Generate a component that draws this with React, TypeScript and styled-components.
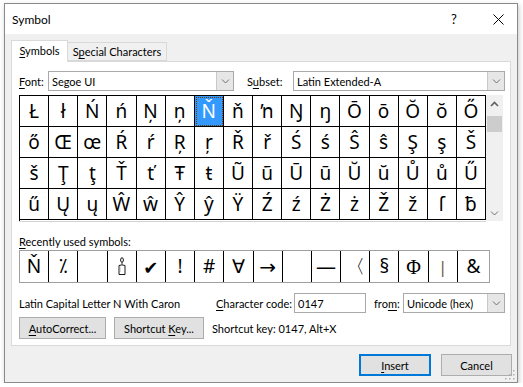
import React from 'react';
import styled, { createGlobalStyle } from 'styled-components';

const UI = `"Lato", "Noto Sans", sans-serif`;

const Global = createGlobalStyle`
  html, body { margin: 0; padding: 0; background: #ffffff; }
  body { font-family: ${UI}; font-size: 11px; color: #000; }
  u { text-decoration-thickness: 1px; text-underline-offset: 2px; }
`;

const Window = styled.div`
  margin: 3px 0 0 4px;
  width: 514px;
  height: 380px;
  box-sizing: border-box;
  border: 1px solid #8a8a8a;
  box-shadow: 1px 2px 5px rgba(0, 0, 0, 0.22);
  background: #f0f0f0;
  display: flex;
  flex-direction: column;
  position: relative;
  font-family: ${UI};
  font-size: 11px;
`;

const TitleBar = styled.div`
  height: 30px;
  flex: none;
  background: #fff;
  display: flex;
  align-items: center;
  padding-left: 7px;
`;

const Title = styled.div`
  flex: 1;
  font-size: 12px;
`;

const TitleButton = styled.div<{ $w: number }>`
  width: ${p => p.$w}px;
  height: 30px;
  display: flex;
  align-items: center;
  justify-content: center;
  font-size: 13px;
  color: #000;
`;

const Body = styled.div`
  flex: 1;
  display: flex;
  flex-direction: column;
  padding: 6px 6px 0 6px;
`;

const TabStrip = styled.div`
  display: flex;
  align-items: flex-end;
  height: 21px;
  position: relative;
  z-index: 2;
`;

const Tab = styled.div<{ $active?: boolean; $w: number }>`
  box-sizing: border-box;
  width: ${p => p.$w}px;
  height: ${p => (p.$active ? 22 : 19)}px;
  margin-bottom: ${p => (p.$active ? -1 : 0)}px;
  background: ${p => (p.$active ? '#fff' : '#f0f0f0')};
  border: 1px solid #d9d9d9;
  border-bottom: ${p => (p.$active ? 'none' : '1px solid #d9d9d9')};
  border-left: ${p => (p.$active ? '1px solid #d9d9d9' : 'none')};
  display: flex;
  align-items: center;
  justify-content: center;
  padding-bottom: ${p => (p.$active ? 2 : 0)}px;
  white-space: nowrap;
`;

const Panel = styled.div`
  box-sizing: border-box;
  width: 500px;
  height: 285px;
  background: #fff;
  border: 1px solid #d9d9d9;
  padding: 9px 6px 0 7px;
  display: flex;
  flex-direction: column;
  position: relative;
  z-index: 1;
`;

const Row = styled.div<{ $h: number; $mt?: number }>`
  display: flex;
  align-items: center;
  height: ${p => p.$h}px;
  margin-top: ${p => p.$mt ?? 0}px;
`;

const Label = styled.span<{ $w?: number; $ml?: number }>`
  ${p => (p.$w ? `width: ${p.$w}px;` : '')}
  margin-left: ${p => p.$ml ?? 0}px;
  flex: none;
  white-space: nowrap;
`;

const Combo = styled.div<{ $w: number }>`
  box-sizing: border-box;
  width: ${p => p.$w}px;
  height: 20px;
  border: 1px solid #a9a9a9;
  background: #fff;
  display: flex;
  align-items: stretch;
  flex: none;
`;

const ComboText = styled.div`
  flex: 1;
  display: flex;
  align-items: center;
  padding-left: 3px;
  white-space: nowrap;
`;

const ComboButton = styled.div`
  width: 16px;
  background: #e6e6e6;
  border-left: 1px solid #c9c9c9;
  display: flex;
  align-items: center;
  justify-content: center;
`;

const Edit = styled.div<{ $w: number }>`
  box-sizing: border-box;
  width: ${p => p.$w}px;
  height: 20px;
  border: 1px solid #a9a9a9;
  background: #fff;
  display: flex;
  align-items: center;
  padding-left: 3px;
  flex: none;
`;

const GridWrap = styled.div`
  display: flex;
  margin-top: 4px;
`;

const Grid = styled.div`
  box-sizing: border-box;
  width: 467px;
  display: grid;
  grid-template-columns: repeat(16, 1fr);
  grid-auto-rows: 31px;
  border-top: 1px solid #000;
  border-left: 1px solid #000;
  box-shadow: 0 1px 0 #d4d4d4;
`;

const Cell = styled.div<{ $sel?: boolean }>`
  box-sizing: border-box;
  border-right: 1px solid #000;
  border-bottom: 1px solid #000;
  display: flex;
  align-items: center;
  justify-content: center;
  font-family: "Noto Sans", "DejaVu Sans", sans-serif;
  font-size: 19px;
  line-height: 1;
  padding-top: 1px;
  background: ${p => (p.$sel ? '#3399ff' : 'transparent')};
  color: ${p => (p.$sel ? '#fff' : '#000')};
  outline: ${p => (p.$sel ? '1px dotted #6a3a00' : 'none')};
  outline-offset: -2px;
`;

const Scrollbar = styled.div`
  width: 17px;
  height: 126px;
  background: #f0f0f0;
  display: flex;
  flex-direction: column;
  align-items: center;
`;

const ScrollArrow = styled.div`
  height: 17px;
  width: 17px;
  display: flex;
  align-items: center;
  justify-content: center;
  flex: none;
`;

const Thumb = styled.div`
  width: 15px;
  height: 16px;
  background: #cdcdcd;
  margin-top: 4px;
`;

const Spacer = styled.div`
  flex: 1;
`;

const RecentRow = styled.div`
  box-sizing: border-box;
  width: 471px;
  height: 33px;
  margin-top: 1px;
  border: 1px solid #a0a0a0;
  display: grid;
  grid-template-columns: repeat(15, 29.2px) 1fr;
`;

const RecentCell = styled.div<{ $serif?: boolean; $last?: boolean }>`
  box-sizing: border-box;
  border-right: ${p => (p.$last ? 'none' : '1px solid #000')};
  display: flex;
  align-items: center;
  justify-content: center;
  font-family: ${p => (p.$serif ? '"Liberation Serif", serif' : '"Noto Sans", "DejaVu Sans", sans-serif')};
  font-size: 19px;
  line-height: 1;
`;

const Button = styled.div<{ $w: number; $default?: boolean; $ml?: number }>`
  box-sizing: border-box;
  width: ${p => p.$w}px;
  height: 22px;
  flex: none;
  margin-left: ${p => p.$ml ?? 0}px;
  background: #e1e1e1;
  border: ${p => (p.$default ? '2px solid #0078d7' : '1px solid #adadad')};
  display: flex;
  align-items: center;
  justify-content: center;
  white-space: nowrap;
`;

const Footer = styled.div`
  display: flex;
  justify-content: flex-end;
  gap: 10px;
  margin-top: 8px;
  margin-right: -1px;
`;

const Grip = styled.svg`
  position: absolute;
  right: 2px;
  bottom: 2px;
`;

const Chevron = ({ up }: { up?: boolean }) => (
  <svg width="9" height="6" viewBox="0 0 9 6">
    <path
      d={up ? 'M1 5 L4.5 1.5 L8 5' : 'M1 1.5 L4.5 5 L8 1.5'}
      fill="none"
      stroke={up ? '#606060' : '#707070'}
      strokeWidth={up ? 1.6 : 1}
    />
  </svg>
);

const Candle = () => (
  <svg width="8" height="19" viewBox="0 0 8 19">
    <ellipse cx="4" cy="3" rx="1.4" ry="2.3" fill="none" stroke="#000" strokeWidth="0.9" />
    <line x1="4" y1="5.3" x2="4" y2="7.5" stroke="#000" strokeWidth="0.8" />
    <path d="M1 8.5 Q4 7.2 7 8.5 L7 17.5 L1 17.5 Z" fill="#fff" stroke="#000" strokeWidth="0.9" />
    <path d="M2 9.5 L2 15" stroke="#999" strokeWidth="0.7" />
  </svg>
);

const startCode = 0x0141;
const symbols = Array.from({ length: 64 }, (_, i) => String.fromCharCode(startCode + i));

type Recent = { ch?: string; node?: React.ReactNode; serif?: boolean; size?: number; color?: string };
const recent: Recent[] = [
  { ch: 'Ň' },
  { ch: '⁒' },
  { ch: '' },
  { node: <Candle /> },
  { ch: '✔', size: 18 },
  { ch: '!' },
  { ch: '#' },
  { ch: '∀', serif: true },
  { ch: '→', size: 20 },
  { ch: '' },
  { ch: '—', size: 20 },
  { ch: '〈', serif: true },
  { ch: '§' },
  { ch: 'Φ', serif: true, size: 20 },
  { ch: '|', color: '#6e5846', size: 17 },
  { ch: '&' },
];

export default function App() {
  return (
    <>
      <Global />
      <Window>
        <TitleBar>
          <Title>Symbol</Title>
          <TitleButton $w={50}>?</TitleButton>
          <TitleButton $w={38}>
            <svg width="11" height="11" viewBox="0 0 11 11">
              <path d="M0.5 0.5 L10.5 10.5 M10.5 0.5 L0.5 10.5" stroke="#000" strokeWidth="1" />
            </svg>
          </TitleButton>
        </TitleBar>
        <Body>
          <TabStrip>
            <Tab $active $w={57}>
              <span><u>S</u>ymbols</span>
            </Tab>
            <Tab $w={99}>
              <span>S<u>p</u>ecial Characters</span>
            </Tab>
          </TabStrip>
          <Panel>
            <Row $h={20}>
              <Label $w={29}>
                <u>F</u>ont:
              </Label>
              <Combo $w={186}>
                <ComboText>Segoe UI</ComboText>
                <ComboButton>
                  <Chevron />
                </ComboButton>
              </Combo>
              <Label $w={46} $ml={13}>
                S<u>u</u>bset:
              </Label>
              <Combo $w={212}>
                <ComboText>Latin Extended-A</ComboText>
                <ComboButton>
                  <Chevron />
                </ComboButton>
              </Combo>
            </Row>
            <GridWrap>
              <Grid>
                {symbols.map((s, i) => (
                  <Cell key={i} $sel={i === 6}>
                    {s}
                  </Cell>
                ))}
              </Grid>
              <Scrollbar>
                <ScrollArrow>
                  <Chevron up />
                </ScrollArrow>
                <Thumb />
                <Spacer />
                <ScrollArrow>
                  <Chevron />
                </ScrollArrow>
              </Scrollbar>
            </GridWrap>
            <Row $h={16} $mt={12}>
              <Label>
                <u>R</u>ecently used symbols:
              </Label>
            </Row>
            <RecentRow>
              {recent.map((r, i) => (
                <RecentCell
                  key={i}
                  $serif={r.serif}
                  $last={i === recent.length - 1}
                  style={r.size || r.color ? { fontSize: r.size, color: r.color } : undefined}
                >
                  {r.node ?? r.ch}
                </RecentCell>
              ))}
            </RecentRow>
            <Row $h={20} $mt={10}>
              <Label $w={197}>Latin Capital Letter N With Caron</Label>
              <Label $w={78}>
                <u>C</u>haracter code:
              </Label>
              <Edit $w={72}>0147</Edit>
              <Label $w={29} $ml={8}>
                fro<u>m</u>:
              </Label>
              <Combo $w={102}>
                <ComboText>Unicode (hex)</ComboText>
                <ComboButton>
                  <Chevron />
                </ComboButton>
              </Combo>
            </Row>
            <Row $h={22} $mt={4}>
              <Button $w={87}>
                <span><u>A</u>utoCorrect...</span>
              </Button>
              <Button $w={90} $ml={8}>
                <span>Shortcut <u>K</u>ey...</span>
              </Button>
              <Label $ml={8}>Shortcut key: 0147, Alt+X</Label>
            </Row>
          </Panel>
          <Footer>
            <Button $w={72} $default>
              <span><u>I</u>nsert</span>
            </Button>
            <Button $w={71}>Cancel</Button>
          </Footer>
        </Body>
        <Grip width="11" height="11" viewBox="0 0 11 11">
          {[
            [9, 1], [9, 5], [5, 5], [9, 9], [5, 9], [1, 9],
          ].map(([x, y], i) => (
            <rect key={i} x={x} y={y} width="1.5" height="1.5" fill="#b0b0b0" />
          ))}
        </Grip>
      </Window>
    </>
  );
}
